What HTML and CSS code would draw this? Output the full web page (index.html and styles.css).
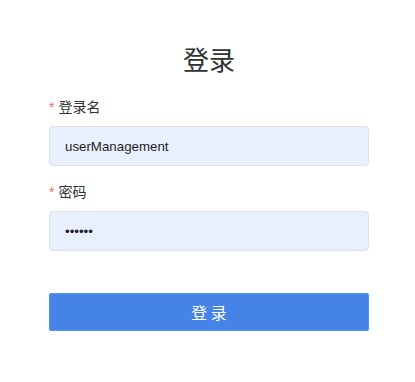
FILE: index.html
```html
<!DOCTYPE html>
<html lang="zh-CN">
<head>
    <meta charset="UTF-8">
    <meta name="viewport" content="width=device-width, initial-scale=1.0">
    <title>登录</title>
    <link rel="stylesheet" href="styles.css">
</head>
<body>

<div class="login-box">
    <h3 class="title">登录</h3>
    <form class="login-form">
        <div class="form-item">
            <label class="form-label" for="username"><span class="required">*</span>登录名</label>
            <input type="text" id="username" class="form-input" value="userManagement">
        </div>
        <div class="form-item">
            <label class="form-label" for="password"><span class="required">*</span>密码</label>
            <input type="password" id="password" class="form-input" value="123456">
        </div>
        <button type="button" class="login-btn">登 录</button>
    </form>
</div>

</body>
</html>
```

FILE: styles.css
```css
body {
    margin: 0;
    padding: 0;
    background-color: #FFF;
    font-family: 'Liberation Sans', 'Noto Sans CJK SC', sans-serif;
}
.login-box {
    width: 320px;
    margin-left: 49px;
    padding-top: 44px;
}
.title {
    margin: 0 0 19px;
    font-size: 26px;
    line-height: 34px;
    font-weight: normal;
    color: #303133;
    text-align: center;
}
.form-item {
    margin-bottom: 16px;
}
.form-label {
    display: block;
    font-size: 14px;
    line-height: 20px;
    color: #303133;
    margin-bottom: 9px;
}
.required {
    color: #F56C6C;
    margin-right: 4px;
}
.form-input {
    display: block;
    box-sizing: border-box;
    width: 100%;
    height: 40px;
    padding: 0 15px;
    background-color: #E8F0FE;
    border: 1px solid #DCDFE6;
    border-radius: 4px;
    font-family: 'Liberation Sans', sans-serif;
    font-size: 13.3px;
    color: #1F1F1F;
    outline: none;
}
.login-btn {
    display: block;
    box-sizing: border-box;
    width: 100%;
    height: 38px;
    margin-top: 42px;
    background-color: #4584E6;
    border: 1px solid #409EFF;
    border-radius: 2px;
    color: #FFF;
    font-family: 'Noto Sans CJK SC', sans-serif;
    font-size: 16px;
    cursor: pointer;
}
```
